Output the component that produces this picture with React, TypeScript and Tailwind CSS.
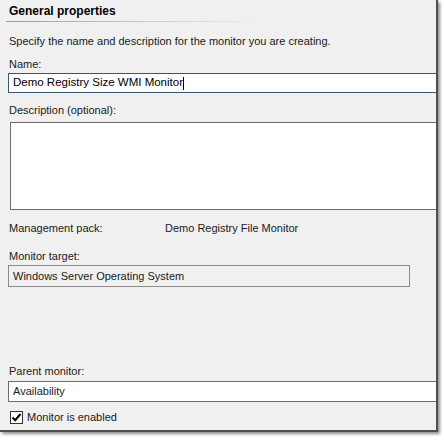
import React from 'react';

const font = { fontFamily: '"Liberation Sans", Arial, sans-serif' };

const App = () => {
    return (
        <div className="w-[444px] h-[440px] bg-white" style={font}>
            <div className="w-[438px] h-[432px] bg-[#f0f0f0] border-r-2 border-b-2 border-[#505050] shadow-[2px_2px_3px_rgba(0,0,0,0.45)] pt-[4px] text-[11px] text-[#1a1a1a] overflow-hidden">
                {/* header */}
                <div className="pl-[9px] font-bold text-[12px] leading-[14px] text-black">General properties</div>
                <div className="ml-[6px] mt-[3px] h-px w-[260px] bg-gradient-to-r from-[#9a9a9a] via-[#c8c8c8] to-transparent" />

                <div className="pl-[9px] mt-[12px] leading-[14px]">
                    Specify the name and description for the monitor you are creating.
                </div>

                <div className="pl-[9px] mt-[9px] leading-[14px]">Name:</div>
                <div className="ml-[8px] mt-[2px] h-[20px] border border-r-0 border-[#3d566b] bg-white flex items-center pl-[4px] text-[11.5px] text-black">
                    <span>Demo Registry Size WMI Monitor</span>
                    <span className="inline-block w-px h-[13px] bg-black" />
                </div>

                <div className="pl-[9px] mt-[10px] leading-[14px]">Description (optional):</div>
                <div className="ml-[10px] mt-[5px] h-[88px] border border-r-0 border-[#6e6e6e] bg-white" />

                <div className="flex mt-[11px] leading-[14px]">
                    <div className="pl-[9px] w-[165px]">Management pack:</div>
                    <div>Demo Registry File Monitor</div>
                </div>

                <div className="pl-[9px] mt-[14px] leading-[14px]">Monitor target:</div>
                <div className="ml-[8px] mt-[2px] w-[402px] h-[22px] border border-[#8a8a8a] bg-[#f0f0f0] flex items-center pl-[4px]">
                    Windows Server Operating System
                </div>

                <div className="pl-[9px] mt-[77px] leading-[14px]">Parent monitor:</div>
                <div className="ml-[8px] mt-[3px] h-[21px] border border-r-0 border-[#6e6e6e] bg-white flex items-center pl-[4px]">
                    Availability
                </div>

                <div className="flex items-center mt-[8px] pl-[10px]">
                    <div className="w-[13px] h-[13px] border border-[#333] bg-white flex items-center justify-center">
                        <svg width="11" height="11" viewBox="0 0 11 11">
                            <path d="M1.5 5.5 L4.2 8.2 L9.5 2" stroke="#000" strokeWidth="2" fill="none" />
                        </svg>
                    </div>
                    <span className="ml-[4px] leading-[14px]">Monitor is enabled</span>
                </div>
            </div>
        </div>
    );
};

export default App;
